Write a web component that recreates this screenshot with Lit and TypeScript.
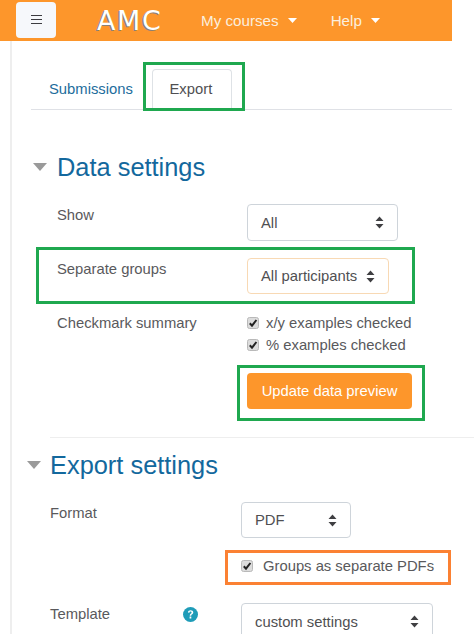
import { LitElement, html, css } from "lit";
import { customElement } from "lit/decorators.js";

const arrows = html`<svg class="arrows" width="9" height="13" viewBox="0 0 9 13"><path d="M4.5 0.5 L8.5 5 H0.5 Z M0.5 8 H8.5 L4.5 12.5 Z" fill="#3f3f42"/></svg>`;
const caret = html`<svg class="caret" width="9" height="5" viewBox="0 0 9 5"><path d="M0 0 H9 L4.5 5 Z" fill="#fff"/></svg>`;
const tri = html`<svg class="tri" width="14" height="8" viewBox="0 0 14 8"><path d="M0 0 H14 L7 8 Z" fill="#9a9a9a"/></svg>`;
const check = html`<svg class="cb" width="12" height="12" viewBox="0 0 12 12"><rect x=".5" y=".5" width="11" height="11" rx="2" fill="#dcdcdc" stroke="#b9b9b9"/><path d="M2.8 6.2 L5 8.6 L9.4 3" fill="none" stroke="#222" stroke-width="2"/></svg>`;

@customElement("app-root")
export class AppRoot extends LitElement {
  static styles = css`
    :host { display: block; position: relative; width: 474px; height: 634px; overflow: hidden; background: #fff;
      font-family: "Liberation Sans", Arial, sans-serif; font-size: 14.8px; color: #59595c; }
    .top { display: flex; align-items: center; width: 452px; height: 41px; background: #fd962b; color: #fff; }
    .burger { display: flex; align-items: center; justify-content: center; box-sizing: border-box; width: 40px; height: 36px; margin: 0 1px 2px 16px;
      background: #f6f8fb; border-radius: 4px; }
    .logo { margin-left: 40px; width: 104px; font-family: "DejaVu Sans", sans-serif; font-size: 27px; line-height: 30px; letter-spacing: 1.6px;
      color: #fff; text-shadow: -1.5px 1px 0 #8a8178; font-weight: 400; }
    .nav { display: flex; align-items: center; font-size: 15.2px; color: #fbeede; margin-bottom: 1px; }
    .nav .caret { margin-left: 9px; }
    .nav.help { margin-left: 34px; }
    main { margin-left: 10px; border-left: 2px solid #eeeeee; height: 593px; }
    .tabs { display: flex; box-sizing: border-box; margin-left: 19px; width: 421px; height: 69px; padding-top: 28px; border-bottom: 1px solid #dfe1e6; }
    .tab { display: flex; align-items: center; height: 40px; padding: 0 18px; color: #1d6d9c; }
    .tab.active { box-sizing: border-box; width: 80px; padding: 0 2px 0 0; justify-content: center; color: #4f4f52; margin-left: 1px;
      border: 1px solid #dee2e6; border-bottom: 1px solid #fff; border-radius: 4px 4px 0 0; background: #fff; }
    .head { display: flex; align-items: center; height: 30px; font-size: 25.4px; color: #13689d; }
    .head.one { margin: 42px 0 22px 21px; }
    .head.one .tri { margin-right: 10px; }
    .head.two { margin: 12px 0 22px 15px; }
    .head.two .tri { margin-right: 9px; }
    .row { display: grid; align-items: start; }
    .row.a { grid-template-columns: 190px 1fr; margin-left: 45px; }
    .row.b { grid-template-columns: 191px 1fr; margin-left: 38px; }
    .lab { display: flex; align-items: center; height: 22px; }
    .sel { display: flex; align-items: center; justify-content: space-between; box-sizing: border-box; height: 37px; padding: 0 13px 0 13px;
      border: 1px solid #ced4da; border-radius: 4px; background: #fff; color: #4f4f52; margin-bottom: 17px; }
    .sel.w151 { width: 151px; }
    .sel.w142 { width: 142px; height: 36px; border-color: #f8d9b4; margin-bottom: 18px; }
    .sel.w110 { width: 110px; height: 36px; }
    .sel.w192 { width: 192px; height: 37px; margin: 0; }
    .chk { display: flex; align-items: center; height: 22px; gap: 7px; }
    .chk.big { gap: 10px; margin-bottom: 26px; }
    .btn { display: flex; align-items: center; justify-content: center; box-sizing: border-box; width: 165px; height: 36px; margin-top: 17px;
      background: #fd962b; color: #fff; border-radius: 4px; font-size: 14.8px; }
    hr { border: 0; border-top: 1px solid #eeeeee; margin: 28px 0 0 38px; }
    .hint { margin-left: 73px; }
    .frame { position: absolute; box-sizing: border-box; border: 3px solid #1fa84f; }
    .frame.o { border-color: #fb8133; }
  `;

  render() {
    return html`
      <header class="top">
        <div class="burger"><svg width="11" height="11" viewBox="0 0 11 11"><path d="M0 1.5 H11 M0 5.5 H11 M0 9.5 H11" stroke="#3c3c40" stroke-width="1.2"/></svg></div>
        <div class="logo">AMC</div>
        <div class="nav">My courses ${caret}</div>
        <div class="nav help">Help ${caret}</div>
      </header>
      <main>
        <nav class="tabs">
          <div class="tab">Submissions</div>
          <div class="tab active">Export</div>
        </nav>
        <section>
          <div class="head one">${tri}Data settings</div>
          <div class="row a"><div class="lab">Show</div><div class="sel w151">All ${arrows}</div></div>
          <div class="row a"><div class="lab">Separate groups</div><div class="sel w142">All participants ${arrows}</div></div>
          <div class="row a"><div class="lab">Checkmark summary</div>
            <div>
              <div class="chk">${check}x/y examples checked</div>
              <div class="chk">${check}% examples checked</div>
              <div class="btn">Update data preview</div>
            </div>
          </div>
        </section>
        <hr />
        <section>
          <div class="head two">${tri}Export settings</div>
          <div class="row b"><div class="lab">Format</div>
            <div>
              <div class="sel w110">PDF ${arrows}</div>
              <div class="chk big">${check}Groups as separate PDFs</div>
            </div>
          </div>
          <div class="row b"><div class="lab">Template
              <svg class="hint" width="15" height="15" viewBox="0 0 15 15"><circle cx="7.5" cy="7.5" r="7.5" fill="#1f9cb8"/><path d="M4.9 5.6 C5 3.9 6.2 3.2 7.6 3.2 C9.1 3.2 10.3 4.1 10.3 5.4 C10.3 7.2 8.2 7.1 8.2 8.7 H6.7 C6.7 6.6 8.6 6.6 8.6 5.5 C8.6 4.9 8.2 4.6 7.5 4.6 C6.8 4.6 6.5 5 6.4 5.8 Z M6.6 9.6 H8.3 V11.4 H6.6 Z" fill="#fff"/></svg>
            </div>
            <div class="sel w192">custom settings ${arrows}</div>
          </div>
        </section>
      </main>
      <div class="frame" style="left:143px;top:62px;width:102px;height:49px"></div>
      <div class="frame" style="left:36px;top:247px;width:379px;height:57px"></div>
      <div class="frame" style="left:237px;top:365px;width:188px;height:56px"></div>
      <div class="frame o" style="left:225px;top:550px;width:226px;height:35px"></div>
    `;
  }
}
